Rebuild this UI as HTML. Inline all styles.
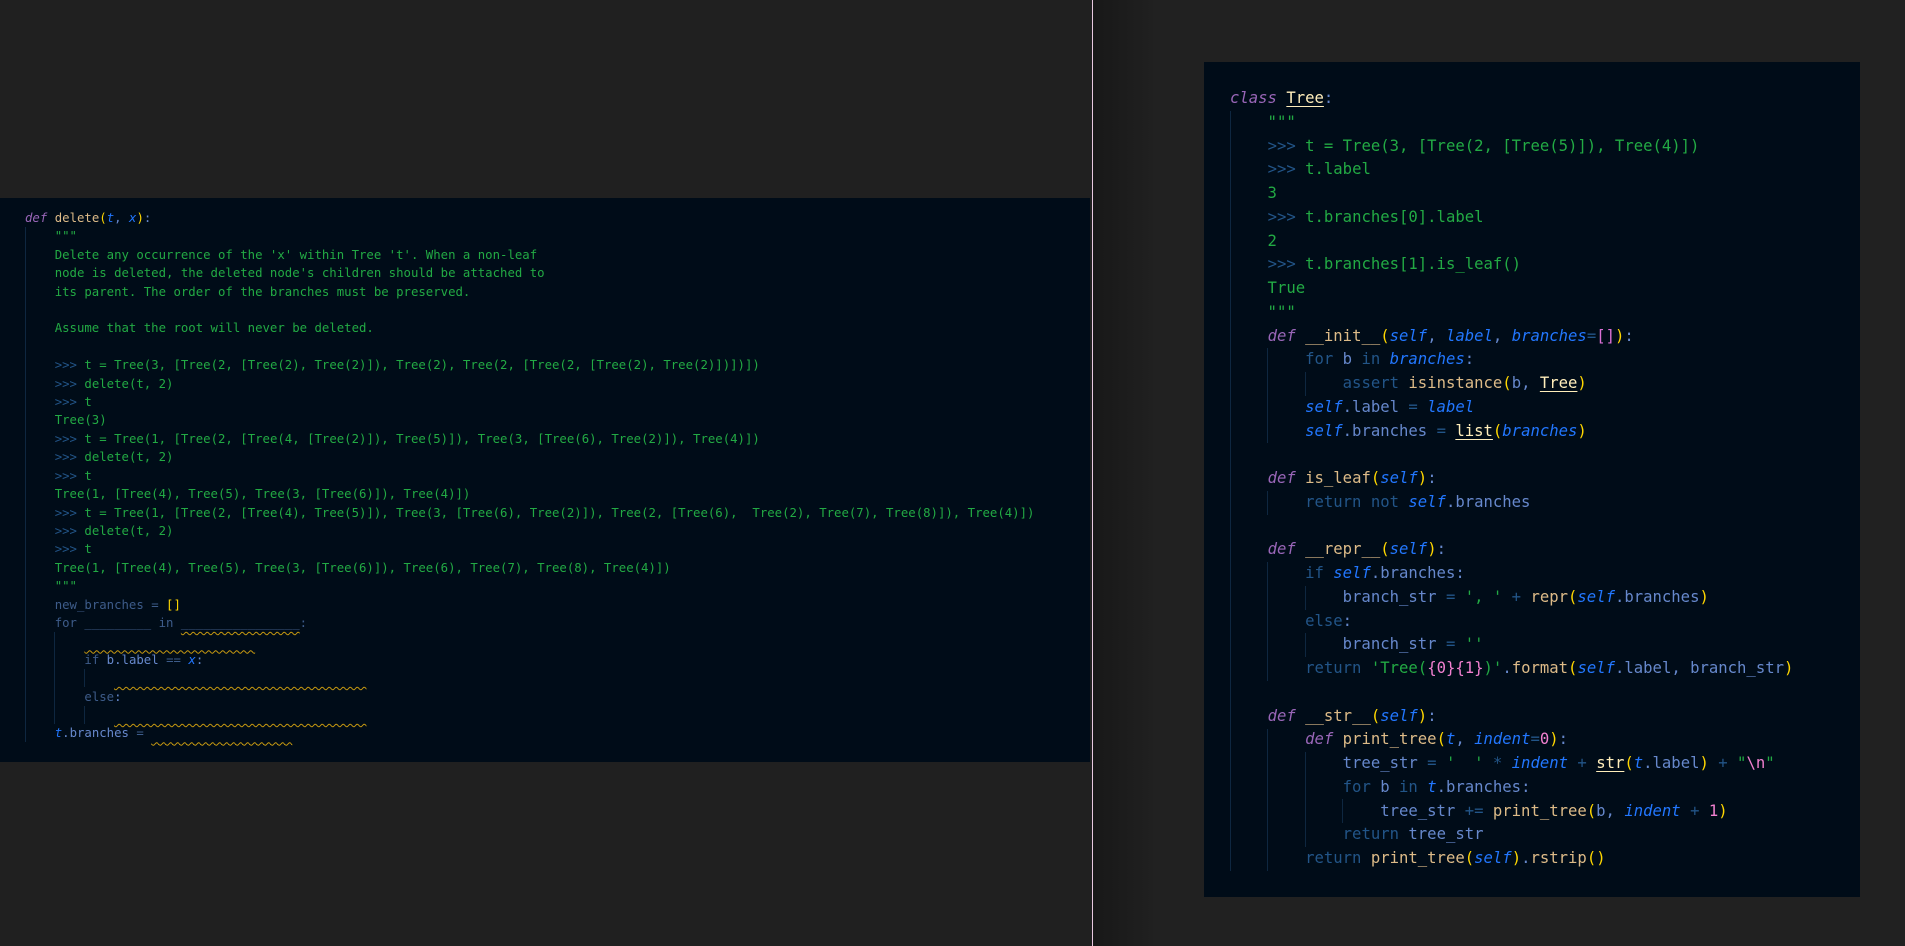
<!DOCTYPE html>
<html><head><meta charset="utf-8"><style>
html,body{margin:0;padding:0;}
body{width:1905px;height:946px;background:#202020;position:relative;overflow:hidden;font-family:"Liberation Mono",monospace;}
.divl{position:absolute;left:1092px;top:0;width:1px;height:946px;background:#e8c8e0;}
.shadow{position:absolute;left:1093px;top:0;width:60px;height:946px;background:linear-gradient(to right,#181818,#202020);}
.rbg{position:absolute;left:1153px;top:0;right:0;height:946px;background:#212121;}
.panel{position:absolute;background:#000c18;}
pre{margin:0;position:absolute;white-space:pre;}
.L{font-size:12.33px;line-height:18.4px;left:25px;top:209px;color:#6688cc;}
.R{font-size:15.6px;line-height:23.75px;left:1230px;top:87px;color:#6688cc;}
.k{color:#9966b8;font-style:italic}
.f{color:#ddbb88}
.p{color:#2277ff;font-style:italic}
.kw{color:#225588}
.o{color:#225588}
.g{color:#22aa44}
.pr{color:#225588}
.y{color:#ffd700}
.pk{color:#da70d6}
.n{color:#f280d0}
.T{color:#ffeebb;text-decoration:underline;text-underline-offset:3px}
.d{color:#3d5c8a}
.sq{text-decoration:underline wavy #c89a10;text-underline-offset:4px;text-decoration-thickness:1px}
.gd{position:absolute;width:1px;background:#0e2740;}
</style></head><body>
<div class="rbg"></div>
<div class="shadow"></div>
<div class="divl"></div>
<div class="panel" style="left:0;top:198px;width:1090px;height:564px;"></div>
<div class="panel" style="left:1204px;top:62px;width:656px;height:835px;"></div>

<div class="gd" style="left:25px;top:227px;height:515px"></div>
<div class="gd" style="left:54px;top:632px;height:92px"></div>
<div class="gd" style="left:84px;top:669px;height:18px"></div>
<div class="gd" style="left:84px;top:706px;height:18px"></div>

<div class="gd" style="left:1230px;top:111px;height:760px"></div>
<div class="gd" style="left:1267px;top:348px;height:95px"></div>
<div class="gd" style="left:1267px;top:491px;height:24px"></div>
<div class="gd" style="left:1267px;top:562px;height:119px"></div>
<div class="gd" style="left:1267px;top:729px;height:142px"></div>
<div class="gd" style="left:1305px;top:372px;height:24px"></div>
<div class="gd" style="left:1305px;top:586px;height:24px"></div>
<div class="gd" style="left:1305px;top:633px;height:24px"></div>
<div class="gd" style="left:1305px;top:752px;height:95px"></div>
<div class="gd" style="left:1342px;top:799px;height:24px"></div>

<pre class="L"><span class="k">def</span> <span class="f">delete</span><span class="y">(</span><span class="p">t</span>, <span class="p">x</span><span class="y">)</span>:
<span class="g">    """
    Delete any occurrence of the 'x' within Tree 't'. When a non-leaf
    node is deleted, the deleted node's children should be attached to
    its parent. The order of the branches must be preserved.

    Assume that the root will never be deleted.

    <span class="pr">&gt;&gt;&gt;</span> t = Tree(3, [Tree(2, [Tree(2), Tree(2)]), Tree(2), Tree(2, [Tree(2, [Tree(2), Tree(2)])])])
    <span class="pr">&gt;&gt;&gt;</span> delete(t, 2)
    <span class="pr">&gt;&gt;&gt;</span> t
    Tree(3)
    <span class="pr">&gt;&gt;&gt;</span> t = Tree(1, [Tree(2, [Tree(4, [Tree(2)]), Tree(5)]), Tree(3, [Tree(6), Tree(2)]), Tree(4)])
    <span class="pr">&gt;&gt;&gt;</span> delete(t, 2)
    <span class="pr">&gt;&gt;&gt;</span> t
    Tree(1, [Tree(4), Tree(5), Tree(3, [Tree(6)]), Tree(4)])
    <span class="pr">&gt;&gt;&gt;</span> t = Tree(1, [Tree(2, [Tree(4), Tree(5)]), Tree(3, [Tree(6), Tree(2)]), Tree(2, [Tree(6),  Tree(2), Tree(7), Tree(8)]), Tree(4)])
    <span class="pr">&gt;&gt;&gt;</span> delete(t, 2)
    <span class="pr">&gt;&gt;&gt;</span> t
    Tree(1, [Tree(4), Tree(5), Tree(3, [Tree(6)]), Tree(6), Tree(7), Tree(8), Tree(4)])
    """</span>
    <span class="d">new_branches = </span><span class="y">[]</span>
    <span class="d">for _________ in <span class="sq">________________</span>:</span>
        <span class="sq">                       </span>
        <span class="d">if</span> b<span class="i">.label</span> <span class="d">==</span> <span class="p">x</span>:
            <span class="sq">                                  </span>
        <span class="d">else</span>:
            <span class="sq">                                  </span>
    <span class="p">t</span>.branches <span class="d">=</span> <span class="sq">                   </span></pre>

<pre class="R"><span class="k">class</span> <span class="T">Tree</span>:
<span class="g">    """
    <span class="pr">&gt;&gt;&gt;</span> t = Tree(3, [Tree(2, [Tree(5)]), Tree(4)])
    <span class="pr">&gt;&gt;&gt;</span> t.label
    3
    <span class="pr">&gt;&gt;&gt;</span> t.branches[0].label
    2
    <span class="pr">&gt;&gt;&gt;</span> t.branches[1].is_leaf()
    True
    """</span>
    <span class="k">def</span> <span class="f">__init__</span><span class="y">(</span><span class="p">self</span>, <span class="p">label</span>, <span class="p">branches</span><span class="o">=</span><span class="pk">[]</span><span class="y">)</span>:
        <span class="kw">for</span> b <span class="kw">in</span> <span class="p">branches</span>:
            <span class="kw">assert</span> <span class="f">isinstance</span><span class="y">(</span>b, <span class="T">Tree</span><span class="y">)</span>
        <span class="p">self</span>.label <span class="o">=</span> <span class="p">label</span>
        <span class="p">self</span>.branches <span class="o">=</span> <span class="T">list</span><span class="y">(</span><span class="p">branches</span><span class="y">)</span>

    <span class="k">def</span> <span class="f">is_leaf</span><span class="y">(</span><span class="p">self</span><span class="y">)</span>:
        <span class="kw">return not</span> <span class="p">self</span>.branches

    <span class="k">def</span> <span class="f">__repr__</span><span class="y">(</span><span class="p">self</span><span class="y">)</span>:
        <span class="kw">if</span> <span class="p">self</span>.branches:
            branch_str <span class="o">=</span> <span class="g">', '</span> <span class="o">+</span> <span class="f">repr</span><span class="y">(</span><span class="p">self</span>.branches<span class="y">)</span>
        <span class="kw">else</span>:
            branch_str <span class="o">=</span> <span class="g">''</span>
        <span class="kw">return</span> <span class="g">'Tree(<span class="n">{0}{1}</span>)'</span>.<span class="f">format</span><span class="y">(</span><span class="p">self</span>.label, branch_str<span class="y">)</span>

    <span class="k">def</span> <span class="f">__str__</span><span class="y">(</span><span class="p">self</span><span class="y">)</span>:
        <span class="k">def</span> <span class="f">print_tree</span><span class="y">(</span><span class="p">t</span>, <span class="p">indent</span><span class="o">=</span><span class="n">0</span><span class="y">)</span>:
            tree_str <span class="o">=</span> <span class="g">'  '</span> <span class="o">*</span> <span class="p">indent</span> <span class="o">+</span> <span class="T">str</span><span class="y">(</span><span class="p">t</span>.label<span class="y">)</span> <span class="o">+</span> <span class="g">"<span class="n">\n</span>"</span>
            <span class="kw">for</span> b <span class="kw">in</span> <span class="p">t</span>.branches:
                tree_str <span class="o">+=</span> <span class="f">print_tree</span><span class="y">(</span>b, <span class="p">indent</span> <span class="o">+</span> <span class="n">1</span><span class="y">)</span>
            <span class="kw">return</span> tree_str
        <span class="kw">return</span> <span class="f">print_tree</span><span class="y">(</span><span class="p">self</span><span class="y">)</span>.<span class="f">rstrip</span><span class="y">()</span></pre>
</body></html>
